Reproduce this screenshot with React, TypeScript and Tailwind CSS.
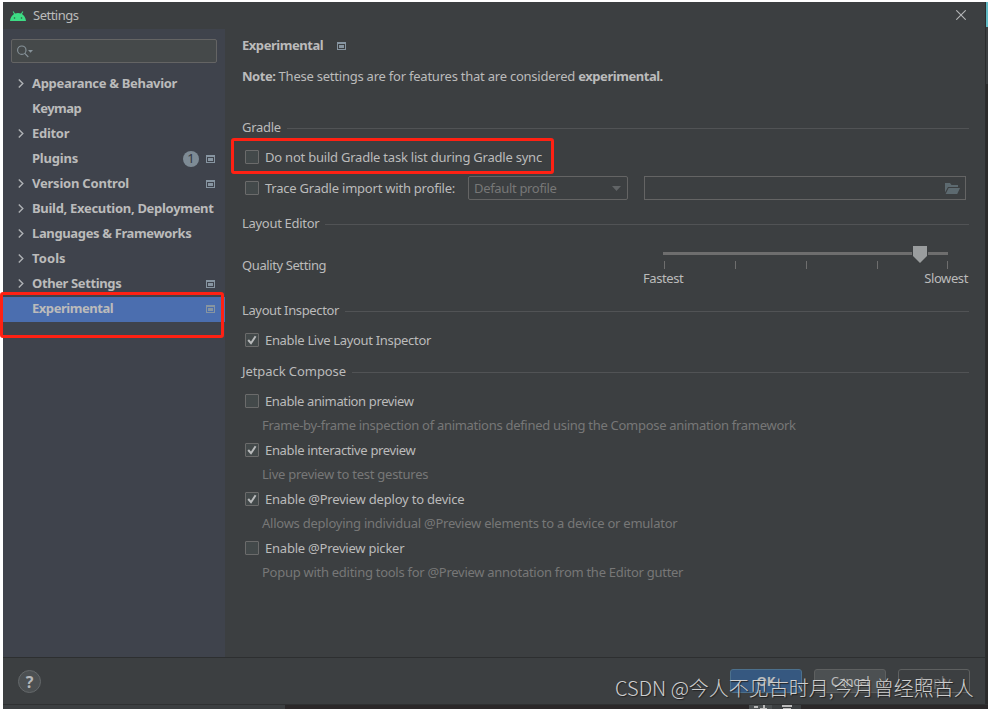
import React from "react";

const FONT = "font-['Noto_Sans','Noto_Sans_CJK_SC',sans-serif]";

function ProjectIcon() {
  return (
    <svg width="10" height="8" viewBox="0 0 10 8" shapeRendering="crispEdges" fill="#8795a1" className="shrink-0">
      <path fillRule="evenodd" d="M0 0h9v8H0zM1 2v5h7V2z" />
      <rect x="2" y="3" width="5" height="3" />
    </svg>
  );
}

function Chevron() {
  return (
    <svg width="6" height="9" viewBox="0 0 6 9" fill="none" stroke="#aeb1b4" strokeWidth="1.4">
      <path d="M0.8 0.6 4.8 4.5 0.8 8.4" />
    </svg>
  );
}

type Item = { label: string; track: string; arrow?: boolean; project?: boolean; count?: number; selected?: boolean };

const items: Item[] = [
  { label: "Appearance & Behavior", track: "tracking-[-0.31px]", arrow: true },
  { label: "Keymap", track: "tracking-[-0.5px]" },
  { label: "Editor", track: "tracking-[-0.3px]", arrow: true },
  { label: "Plugins", track: "tracking-[-0.2px]", project: true, count: 1 },
  { label: "Version Control", track: "tracking-[-0.22px]", arrow: true, project: true },
  { label: "Build, Execution, Deployment", track: "tracking-[-0.3px]", arrow: true },
  { label: "Languages & Frameworks", track: "tracking-[-0.36px]", arrow: true },
  { label: "Tools", track: "tracking-[0.1px]", arrow: true },
  { label: "Other Settings", track: "tracking-[-0.38px]", arrow: true, project: true },
  { label: "Experimental", track: "tracking-[-0.46px]", project: true, selected: true },
];

function Sidebar() {
  return (
    <nav className="w-[222px] shrink-0 bg-[#3f434c] pt-[10px]">
      <div className="ml-2 flex h-6 w-[206px] items-center rounded-[2px] border border-[#646464] bg-[#45494a] pl-[5px]">
        <svg width="17" height="13" viewBox="0 0 17 13" fill="none" stroke="#87939a" strokeWidth="1.1">
          <circle cx="4.8" cy="5.2" r="4.2" />
          <path d="M7.8 8.4 11.3 12" />
          <path d="M11 5h5l-2.500 2.800z" fill="#87939a" stroke="none" />
        </svg>
      </div>
      <ul className="mt-[9px]">
        {items.map((it) => (
          <li key={it.label} className={`flex h-[25px] items-center pb-[2px] pr-[9px] ${it.selected ? "bg-[#4b6eaf]" : ""}`}>
            <span className="flex w-[29px] shrink-0 pl-[15px]">{it.arrow && <Chevron />}</span>
            <span className={`grow whitespace-nowrap font-bold ${it.track}`}>{it.label}</span>
            {it.count && (
              <span className="mr-[7px] flex size-4 items-center justify-center rounded-full bg-[#7e8b95] text-[13px] text-[#34383f]">
                {it.count}
              </span>
            )}
            {it.project && <ProjectIcon />}
          </li>
        ))}
      </ul>
    </nav>
  );
}

function Section({ title, track }: { title: string; track: string }) {
  return (
    <div className="flex h-5 w-[727px] items-center gap-[6px]">
      <h2 className={`whitespace-nowrap ${track}`}>{title}</h2>
      <div className="h-px grow bg-[#515355]" />
    </div>
  );
}

function Check({ label, track, checked }: { label: string; track: string; checked?: boolean }) {
  return (
    <label className="flex h-5 items-center pl-[3px]">
      <span className="mr-[6px] flex size-[14px] shrink-0 items-center justify-center rounded-[1px] border border-[#6b6b6b] bg-[#43494a]">
        {checked && (
          <svg width="10" height="10" viewBox="0 0 10 10" fill="none" stroke="#b8babb" strokeWidth="2">
            <path d="M1.200 5 4 8.200 8.600 1.200" />
          </svg>
        )}
      </span>
      <span className={`whitespace-nowrap pt-[2px] ${track}`}>{label}</span>
    </label>
  );
}

function Hint({ text, track }: { text: string; track: string }) {
  return <p className={`mb-[5px] mt-1 h-5 whitespace-nowrap pl-5 leading-5 text-[#777777] ${track}`}>{text}</p>;
}

function QualitySlider() {
  return (
    <div className="w-[325px]">
      <svg width="325" height="24" viewBox="0 0 325 24" className="block">
        <g shapeRendering="crispEdges" fill="#6e6e6e">
          <rect x="20" y="7" width="285" height="3" />
          <rect x="21" y="16" width="1" height="8" />
          <rect x="92" y="16" width="1" height="8" />
          <rect x="163" y="16" width="1" height="8" />
          <rect x="234" y="16" width="1" height="8" />
          <rect x="304" y="16" width="1" height="8" />
        </g>
        <path d="M269 0h16v12l-8 7-8-7z" fill="#3c3f41" />
        <path d="M270 1h14v10l-7 7-7-7z" fill="#9a9d9e" />
      </svg>
      <div className="flex h-5 items-center justify-between">
        <span className="tracking-[-0.4px]">Fastest</span>
        <span className="tracking-[-0.4px]">Slowest</span>
      </div>
    </div>
  );
}

function Content() {
  return (
    <main className="flex min-w-0 grow flex-col pl-[17px] pt-[7px]">
      <div className="flex h-5 items-center gap-[14px] font-bold">
        <h1 className="tracking-[-0.46px]">Experimental</h1>
        <ProjectIcon />
      </div>
      <p className="mt-[10px] h-5 whitespace-nowrap leading-5 tracking-[-0.23px]">
        <b className="tracking-[-0.46px]">Note:</b> These settings are for features that are considered{" "}
        <b className="tracking-[-0.46px]">experimental.</b>
      </p>
      <div className="mt-[32px]">
        <Section title="Gradle" track="tracking-[-0.3px]" />
      </div>
      <div className="mt-[9px]">
        <Check label="Do not build Gradle task list during Gradle sync" track="tracking-[-0.22px]" />
      </div>
      <div className="mt-[9px] flex h-6 items-center">
        <div className="w-[226px]">
          <Check label="Trace Gradle import with profile:" track="tracking-[-0.22px]" />
        </div>
        <div className="flex h-6 w-[160px] items-center justify-between rounded-[2px] border border-[#646464] pl-[5px] pr-[6px] text-[#777777]">
          <span className="pt-px tracking-[-0.33px]">Default profile</span>
          <svg width="9" height="5" viewBox="0 0 9 5" fill="#616466"><path d="M0 0h9L4.500 5z" /></svg>
        </div>
        <div className="ml-4 flex h-6 w-[322px] items-center justify-end border border-[#646464] pr-[5px]">
          <svg width="15" height="11" viewBox="0 0 15 11" fill="#5d6a70">
            <path d="M0 0h5l1.500 2H13v2H3L0 9.500z" />
            <path d="M3.600 5H15l-2.800 6H0.600z" />
          </svg>
        </div>
      </div>
      <div className="mt-[14px]">
        <Section title="Layout Editor" track="tracking-[-0.3px]" />
      </div>
      <div className="mt-[11px] flex h-[44px] w-[726px] items-start justify-between">
        <span className="mt-[10px] leading-5 tracking-[-0.4px]">Quality Setting</span>
        <QualitySlider />
      </div>
      <div className="mt-[12px]">
        <Section title="Layout Inspector" track="tracking-[-0.37px]" />
      </div>
      <div className="mt-[9px]">
        <Check checked label="Enable Live Layout Inspector" track="tracking-[-0.32px]" />
      </div>
      <div className="mt-[12px]">
        <Section title="Jetpack Compose" track="tracking-[-0.07px]" />
      </div>
      <div className="mt-[9px] flex flex-col">
        <Check label="Enable animation preview" track="tracking-[-0.37px]" />
        <Hint text="Frame-by-frame inspection of animations defined using the Compose animation framework" track="tracking-[-0.29px]" />
        <Check checked label="Enable interactive preview" track="tracking-[-0.35px]" />
        <Hint text="Live preview to test gestures" track="tracking-[-0.25px]" />
        <Check checked label="Enable @Preview deploy to device" track="tracking-[-0.2px]" />
        <Hint text="Allows deploying individual @Preview elements to a device or emulator" track="tracking-[-0.245px]" />
        <Check label="Enable @Preview picker" track="tracking-[-0.22px]" />
        <Hint text="Popup with editing tools for @Preview annotation from the Editor gutter" track="tracking-[-0.275px]" />
      </div>
    </main>
  );
}

function Footer() {
  return (
    <footer className="flex h-[47px] shrink-0 items-start border-t border-[#2d2f30] pl-[15px] pr-[15px] pt-[11px]">
      <div className="mt-px flex size-[23px] items-center justify-center rounded-full border border-[#64686a] bg-[#4c5052] text-[16px] font-bold leading-none text-[#b6b8ba]">?</div>
      <div className="ml-auto flex gap-3">
        <button className="h-6 w-[72px] rounded-[3px] border border-[#4c708c] bg-[#365880] font-bold leading-5">OK</button>
        <button className="h-6 w-[72px] rounded-[3px] border border-[#5e6060] bg-[#4c5052] leading-5 tracking-[-0.3px]">Cancel</button>
        <button className="h-6 w-[72px] rounded-[3px] border border-[#5e6060] leading-5 tracking-[-0.3px] text-[#777777]">Apply</button>
      </div>
    </footer>
  );
}

export default function App() {
  return (
    <div className={`relative h-[709px] w-[990px] overflow-hidden bg-white pl-[3px] pt-[2px] text-[13px] text-[#bbbbbb] ${FONT}`}>
      <div className="flex h-[702px] w-[985px]">
        <div className="flex w-[982px] flex-col bg-[#3c3f41]">
          <header className="flex h-[27px] shrink-0 items-center pl-[7px] pr-[19px]">
            <svg width="16" height="10" viewBox="0 0 16 10">
              <path d="M0 10C0.300 6.700 2 4.200 4 3L2.700 0.700 3.500 0.200 5 2.500C6.900 1.800 9.100 1.800 11 2.500L12.500 0.200 13.300 0.700 12 3C14 4.200 15.700 6.700 16 10z" fill="#3ddc84" />
              <circle cx="4.500" cy="7" r="0.800" fill="#2b5a40" />
              <circle cx="11.500" cy="7" r="0.800" fill="#2b5a40" />
            </svg>
            <span className="ml-[7px] tracking-[-0.5px]">Settings</span>
            <svg className="mb-px ml-auto" width="10" height="10" viewBox="0 0 10 10" stroke="#b4b6b7" strokeWidth="1.100">
              <path d="M0.300 0.300 9.700 9.700M9.700 0.300 0.300 9.700" />
            </svg>
          </header>
          <div className="flex h-[628px]">
            <Sidebar />
            <Content />
          </div>
          <Footer />
        </div>
        <div className="flex w-[3px] flex-col border-l border-[#2b2d2e] bg-[#2b2b2b]">
          <div className="h-[25px] bg-[#5fb9c4]" />
          <div className="h-[57px] bg-[#3c3f41]" />
        </div>
      </div>
      <div className="flex h-[5px] w-[985px] border-t border-[#2f3132] bg-[#2b2829]">
        <div className="w-[282px] bg-[#3c3f41]" />
        <div className="ml-[464px] flex w-[23px] items-start gap-[2px] bg-[#4c5052] pl-[5px]">
          <div className="mt-px h-[2px] w-1 bg-[#bbbbbb]" />
          <svg width="7" height="4" viewBox="0 0 7 4" shapeRendering="crispEdges" fill="#bbbbbb">
            <path d="M3 0h2v3h2v1H0V3h3z" />
          </svg>
        </div>
        <div className="flex w-[29px] items-start justify-center bg-[#3c3f41]">
          <svg width="10" height="4" viewBox="0 0 10 4" shapeRendering="crispEdges" fill="#bbbbbb">
            <path d="M0 0h10v2H0zM1 3h8v1H1z" />
          </svg>
        </div>
      </div>
      <div className="absolute left-[231px] top-[138px] h-9 w-[323px] rounded-[3px] border-3 border-[#ff2113]" />
      <div className="absolute left-0 top-[292px] h-[46px] w-[224px] rounded-[3px] border-3 border-[#ff2113]" />
      <div className="absolute left-[615px] top-[673px] whitespace-nowrap font-['Noto_Sans_CJK_SC',sans-serif] text-[20px] font-light leading-[30px] text-[#cfcfcf] [text-shadow:1px_1px_1px_#222222]">
        CSDN @今人不见古时月,今月曾经照古人
      </div>
    </div>
  );
}
